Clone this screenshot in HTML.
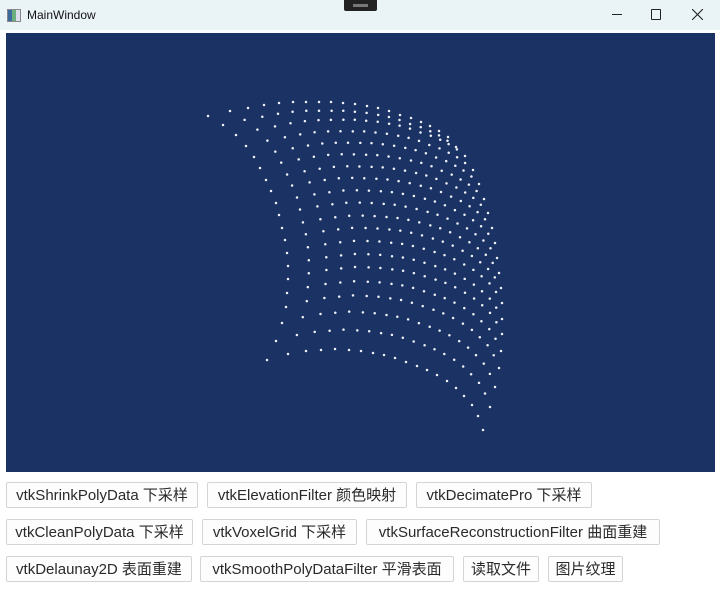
<!DOCTYPE html>
<html><head><meta charset="utf-8"><style>
body{margin:0;width:720px;height:589px;background:#fff;overflow:hidden;position:relative;font-family:"Liberation Sans","Noto Sans CJK SC",sans-serif}
.tb{position:absolute;left:0;top:0;width:720px;height:30px;background:#eaf4f7;}
.tt{position:absolute;left:27px;top:8px;font-size:12px;color:#111}
.ic{position:absolute;left:7px;top:9px;width:12px;height:11px;border:1px solid #888;background:linear-gradient(90deg,#3c6a9c 0 4px,#6ab07c 4px 8px,#dde 8px)}
.nb{position:absolute;left:344px;top:0;width:33px;height:11px;background:#222;border-radius:0 0 2px 2px}
.nb:after{content:"";position:absolute;left:9px;top:4px;width:15px;height:3px;background:#777}
.vp{position:absolute;left:6px;top:33px;width:709px;height:439px;background:#1b3264}
.b{position:absolute;height:26px;border:1px solid #d4d4d4;background:#fdfdfd;border-radius:2px;font-size:15px;line-height:26px;color:#2a2a2a;text-align:center;box-sizing:border-box;white-space:nowrap}
</style></head><body>
<div class="tb"><div class="ic"></div><div class="tt">MainWindow</div>
<div style="position:absolute;left:612px;top:14px;width:10px;height:1px;background:#222"></div>
<div style="position:absolute;left:651px;top:9px;width:8px;height:9px;border:1px solid #222;border-radius:1px"></div>
<svg style="position:absolute;left:692px;top:9px" width="11" height="11"><path d="M0 0L11 11M11 0L0 11" stroke="#222" stroke-width="1.1"/></svg>
</div>
<div class="nb"></div>
<div class="vp"><svg id="s" width="709" height="439"></svg></div>
<div class="b" style="left:6px;top:482px;width:192px">vtkShrinkPolyData 下采样</div>
<div class="b" style="left:207px;top:482px;width:200px">vtkElevationFilter 颜色映射</div>
<div class="b" style="left:416px;top:482px;width:176px">vtkDecimatePro 下采样</div>
<div class="b" style="left:6px;top:519px;width:187px">vtkCleanPolyData 下采样</div>
<div class="b" style="left:202px;top:519px;width:155px">vtkVoxelGrid 下采样</div>
<div class="b" style="left:366px;top:519px;width:294px">vtkSurfaceReconstructionFilter 曲面重建</div>
<div class="b" style="left:6px;top:556px;width:186px">vtkDelaunay2D 表面重建</div>
<div class="b" style="left:200px;top:556px;width:254px">vtkSmoothPolyDataFilter 平滑表面</div>
<div class="b" style="left:463px;top:556px;width:76px">读取文件</div>
<div class="b" style="left:548px;top:556px;width:75px">图片纹理</div>
<script>
var T=[[208,116],[230,111],[248,108],[264,105],[279,103],[293,102],[306,102],[319,102],[331,102],[343,103],[355,104],[367,106],[378,108],[389,111],[400,115],[411,118],[421,122],[430,126],[439,131],[448,137]];
var L=[[208,116],[223,125],[236,135],[246,146],[254,157],[260,168],[266,180],[271,191],[276,203],[279,215],[282,228],[285,240],[287,253],[288,266],[288,279],[287,293],[286,307],[282,323],[276,341],[267,360]];
var B=[[267,360],[288,354],[306,351],[321,350],[335,349],[349,350],[361,351],[373,353],[384,355],[395,358],[406,362],[417,366],[427,370],[437,375],[447,381],[456,388],[464,396],[472,405],[478,416],[483,430]];
var R=[[448,137],[456,147],[465,156],[473,170],[479,184],[484,199],[488,213],[492,228],[495,243],[497,258],[499,273],[501,288],[502,303],[502,319],[502,334],[501,351],[499,368],[495,387],[490,407],[483,430]];
var n=20,h='';
for(var i=0;i<n;i++)for(var j=0;j<n;j++){var u=i/(n-1),v=j/(n-1);
var x=(1-v)*T[i][0]+v*B[i][0]+(1-u)*L[j][0]+u*R[j][0]-((1-u)*(1-v)*T[0][0]+u*(1-v)*T[n-1][0]+(1-u)*v*B[0][0]+u*v*B[n-1][0]);
var y=(1-v)*T[i][1]+v*B[i][1]+(1-u)*L[j][1]+u*R[j][1]-((1-u)*(1-v)*T[0][1]+u*(1-v)*T[n-1][1]+(1-u)*v*B[0][1]+u*v*B[n-1][1]);
h+='<circle cx="'+(x-6).toFixed(1)+'" cy="'+(y-33).toFixed(1)+'" r="1.25" fill="#eef1f7"/>';}
document.getElementById('s').innerHTML=h;
</script>
</body></html>
